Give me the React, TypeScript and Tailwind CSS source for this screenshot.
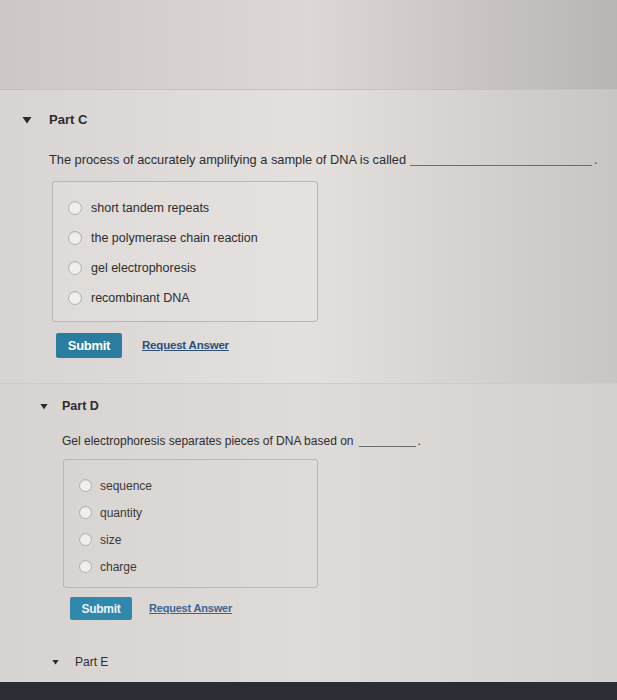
import React from 'react';

const font = { fontFamily: '"Liberation Sans", Arial, sans-serif' };

function Caret({ className = '' }: { className?: string }) {
  return (
    <svg viewBox="0 0 10 8" className={className}>
      <path d="M0.5 1 L9.5 1 L5 7.5 Z" fill="#2a2a2a" />
    </svg>
  );
}

function Radio({ label, size, textClass }: { label: string; size: string; textClass: string }) {
  return (
    <div className="flex items-center">
      <span className={`${size} rounded-full border border-[#b3b0ad] bg-[#f1efed] shadow-[inset_0_1px_1px_rgba(0,0,0,0.08)] shrink-0`} />
      <span className={textClass}>{label}</span>
    </div>
  );
}

export default function App() {
  const partC = ['short tandem repeats', 'the polymerase chain reaction', 'gel electrophoresis', 'recombinant DNA'];
  const partD = ['sequence', 'quantity', 'size', 'charge'];

  return (
    <div
      style={font}
      className="w-[617px] h-[700px] overflow-hidden flex flex-col text-[#2e2d2d] bg-linear-to-r from-[#d8d4d3] via-[#e4e0de] to-[#c8c5c4]"
    >
      <div className="h-[90px] shrink-0 border-b border-[#c6c1bf] bg-linear-to-r from-[#cdc8c7] via-[#ddd8d6] to-[#b9b5b5]" />

      <div className="flex-1 flex flex-col">
        {/* Part C */}
        <section className="pl-[49px] pt-[21px]">
          <div className="-ml-[27px] flex items-center h-[18px]">
            <Caret className="w-[10px] h-[8px]" />
            <span className="ml-[17px] text-[13px] font-bold">Part C</span>
          </div>
          <div className="mt-[24px] flex items-end h-[16px] text-[12.8px]">
            <span>The process of accurately amplifying a sample of DNA is called</span>
            <span className="ml-[4px] w-[182px] border-b border-[#6e6c6b] mb-[3px]" />
            <span className="ml-[2px]">.</span>
          </div>
          <div className="mt-[12px] ml-[3px] w-[266px] h-[141px] border border-[#b9b6b4] rounded-[3px] pt-[11px] pl-[15px] bg-[#e7e4e2]/40">
            {partC.map((o) => (
              <div key={o} className="h-[30px] flex items-center">
                <Radio label={o} size="w-[14px] h-[14px]" textClass="ml-[9px] text-[12.5px]" />
              </div>
            ))}
          </div>
          <div className="mt-[11px] ml-[7px] flex items-center">
            <button className="w-[66px] h-[25px] bg-[#2a7d9f] text-white text-[13px] font-bold rounded-[2px] tracking-[-0.3px]">
              Submit
            </button>
            <span className="ml-[20px] text-[11.5px] font-bold underline text-[#2d4f78] tracking-[-0.2px]">
              Request Answer
            </span>
          </div>
        </section>

        {/* Part D */}
        <section className="flex-1 mt-[25px] pl-[62px] pt-[13px] border-t border-[#cfcbc9] bg-linear-to-r from-[#d6d3d1] via-[#dedbd9] to-[#d3d0ce]">
          <div className="-ml-[22px] flex items-center h-[18px]">
            <Caret className="w-[8px] h-[7px]" />
            <span className="ml-[14px] text-[12.5px] font-bold">Part D</span>
          </div>
          <div className="mt-[19px] flex items-end h-[16px] text-[12px]">
            <span>Gel electrophoresis separates pieces of DNA based on</span>
            <span className="ml-[5px] w-[57px] border-b border-[#6e6c6b] mb-[3px]" />
            <span className="ml-[2px]">.</span>
          </div>
          <div className="mt-[9px] ml-[1px] w-[255px] h-[129px] border border-[#b9b6b4] rounded-[3px] pt-[12px] pl-[15px]">
            {partD.map((o) => (
              <div key={o} className="h-[27px] flex items-center">
                <Radio label={o} size="w-[13px] h-[13px]" textClass="ml-[8px] text-[12px] text-[#3a3939]" />
              </div>
            ))}
          </div>
          <div className="mt-[9px] ml-[8px] flex items-center">
            <button className="w-[62px] h-[23px] bg-[#3088ac] text-white/90 text-[12px] font-bold rounded-[2px] tracking-[-0.3px]">
              Submit
            </button>
            <span className="ml-[17px] text-[11px] font-bold underline text-[#3b6690] tracking-[-0.2px]">
              Request Answer
            </span>
          </div>

          {/* Part E */}
          <div className="mt-[33px] -ml-[10px] flex items-center h-[18px]">
            <Caret className="w-[7px] h-[6px]" />
            <span className="ml-[16px] text-[12px]">Part E</span>
          </div>
        </section>
      </div>

      <div className="h-[18px] shrink-0 bg-[#2a2d33]" />
    </div>
  );
}
